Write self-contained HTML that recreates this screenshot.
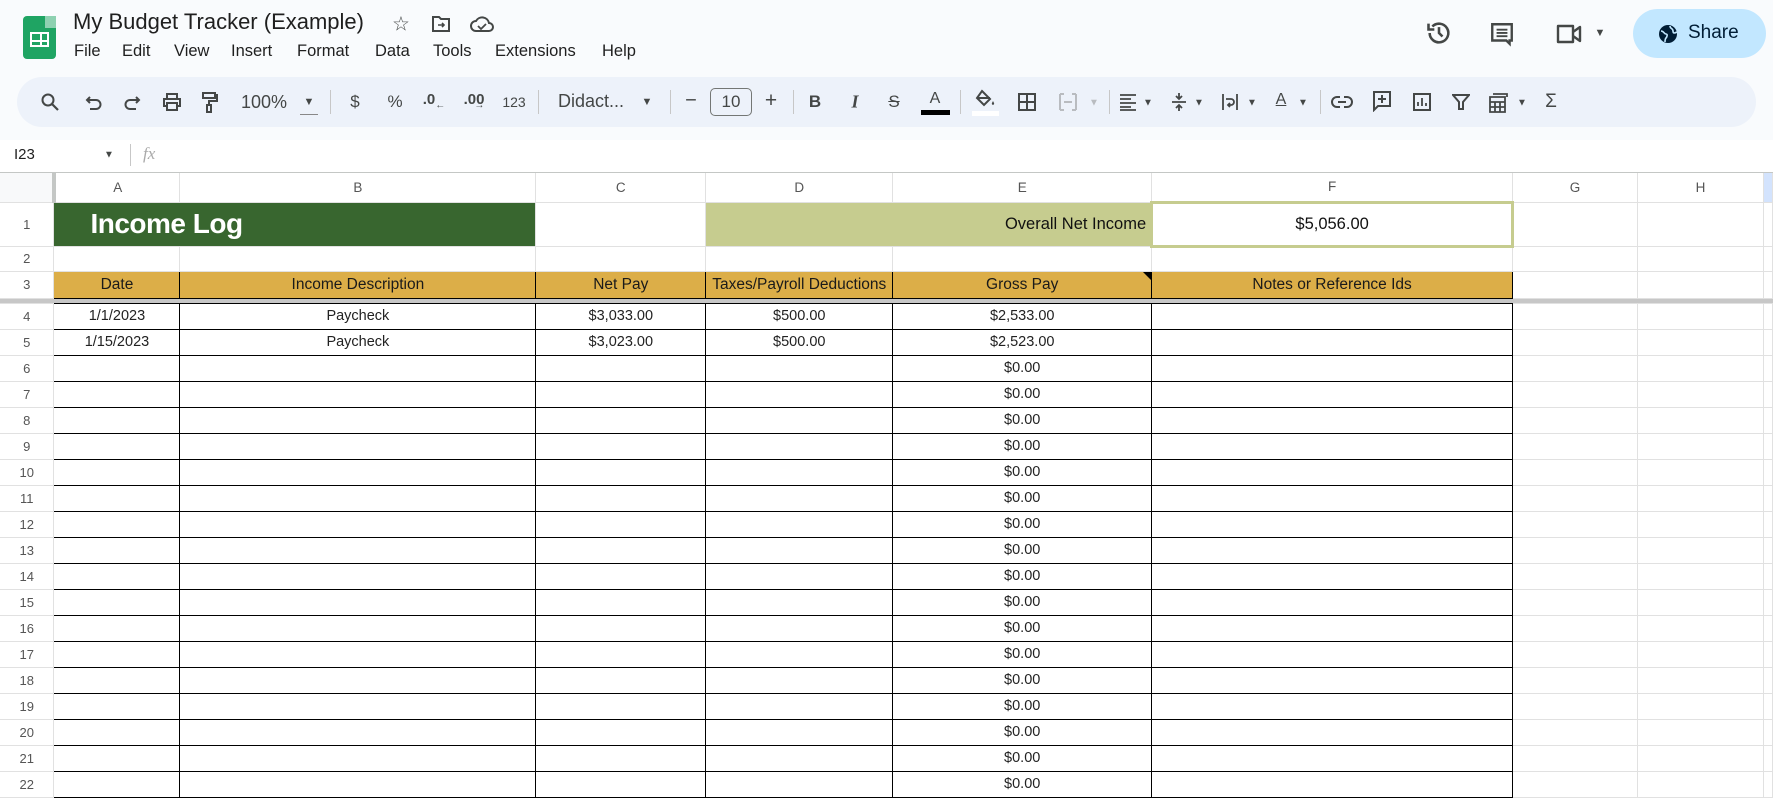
<!DOCTYPE html>
<html><head><meta charset="utf-8"><style>
*{box-sizing:border-box;margin:0;padding:0}
body{width:1773px;height:791px;overflow:hidden;background:#f9fbfd;font-family:"Liberation Sans",sans-serif;position:relative;color:#1f1f1f}
.a{position:absolute}
.ic{position:absolute;font-size:17px;color:#444746;transform:translate(-50%,-50%)}
svg.s{position:absolute;transform:translate(-50%,-50%)}
table{position:absolute;left:0;top:173px;border-collapse:collapse;table-layout:fixed;background:#fff}
td{border:1px solid #e1e1e1;padding:0;text-align:center;font-size:14.5px;color:#222;overflow:hidden;white-space:nowrap}
td:first-child{border-left:none}
tr:first-child td{border-top:none}
td.rh{color:#555;font-size:13px;background:#fff}
tr.ch td{color:#555;font-size:13.5px}
tr.d td.b{border:1px solid #000}
tr.h td.b{font-size:15.5px;color:#1a1a1a}
</style></head><body>
<div class="a" style="left:23px;top:16px;width:33px;height:43px;background:#1fa463;border-radius:4px;clip-path:polygon(0 0,68% 0,100% 28%,100% 100%,0 100%)"></div>
<div class="a" style="left:45px;top:16px;width:11px;height:12px;background:#8ed1b1"></div>
<div class="a" style="left:30px;top:32px;width:19px;height:15px;border:2px solid #fff;background:linear-gradient(#fff,#fff) 7.5px 0/2px 100% no-repeat,linear-gradient(#fff,#fff) 0 5.5px/100% 2px no-repeat"></div>
<div class="a" style="left:73px;top:9px;font-size:22px;color:#1f1f1f">My Budget Tracker (Example)</div>
<div class="ic" style="left:401px;top:24px;font-size:20px">☆</div>
<svg class="s" style="left:441px;top:24px" width="20" height="18" viewBox="0 0 20 18"><path d="M2 2h6l2 2h8v12H2z" fill="none" stroke="#444746" stroke-width="2"/><path d="M7 10h6M11 8l2 2-2 2" fill="none" stroke="#444746" stroke-width="1.6"/></svg>
<svg class="s" style="left:482px;top:24px" width="24" height="18" viewBox="0 0 24 18"><path d="M6 16a5 5 0 0 1 0-10 7 7 0 0 1 13 2 4 4 0 0 1 0 8z" fill="none" stroke="#444746" stroke-width="2"/><path d="M8 11l3 3 5-5" fill="none" stroke="#444746" stroke-width="1.8"/></svg>
<div class="a" style="left:74px;top:42px;font-size:16.5px">
<span style="position:absolute;left:0">File</span><span style="position:absolute;left:48px">Edit</span><span style="position:absolute;left:100px">View</span><span style="position:absolute;left:157px">Insert</span><span style="position:absolute;left:223px">Format</span><span style="position:absolute;left:301px">Data</span><span style="position:absolute;left:359px">Tools</span><span style="position:absolute;left:421px">Extensions</span><span style="position:absolute;left:528px">Help</span></div>
<svg class="s" style="left:1439px;top:33px" width="28" height="28" viewBox="0 0 24 24"><path d="M4 12a8 8 0 1 0 2.3-5.6M3 4v5h5" fill="none" stroke="#444746" stroke-width="2.2"/><path d="M12 7v5l3 3" fill="none" stroke="#444746" stroke-width="2.2"/></svg>
<svg class="s" style="left:1502px;top:34px" width="26" height="26" viewBox="0 0 24 24"><path d="M3 3h18v15h-2v3l-3-3H3z" fill="none" stroke="#444746" stroke-width="2.2"/><path d="M7 8h10M7 11h10M7 14h10" stroke="#444746" stroke-width="1.8"/></svg>
<svg class="s" style="left:1570px;top:34px" width="30" height="24" viewBox="0 0 30 24"><path d="M3 4h15v16H3zM18 10l7-5v14l-7-5" fill="none" stroke="#444746" stroke-width="2.4" stroke-linejoin="round"/></svg>
<div class="ic" style="left:1600px;top:33px;font-size:11px">▼</div>
<div class="a" style="left:1633px;top:9px;width:133px;height:49px;border-radius:25px;background:#c2e7ff"></div>
<svg class="s" style="left:1668px;top:34px" width="20" height="20" viewBox="0 0 20 20"><circle cx="10" cy="10" r="9" fill="#001d35"/><path d="M3 7c3 0 3 3 5 3s1 3 0 4-1 3-1 4M12 2c0 3 3 2 3 5s2 2 4 1" stroke="#c2e7ff" stroke-width="1.6" fill="none"/></svg>
<div class="a" style="left:1688px;top:22px;font-size:19px;color:#001d35">Share</div>
<div class="a" style="left:17px;top:77px;width:1739px;height:50px;border-radius:25px;background:#edf2fa"></div>
<svg class="s" style="left:50px;top:102px" width="20" height="20" viewBox="0 0 20 20"><circle cx="8" cy="8" r="5.5" fill="none" stroke="#444746" stroke-width="2"/><path d="M12 12l6 6" stroke="#444746" stroke-width="2.2"/></svg>
<svg class="s" style="left:94px;top:103px" width="18" height="18" viewBox="0 0 18 18"><path d="M5 3L2 6l3 3M2 6h9a4.5 4.5 0 0 1 0 9H5" fill="none" stroke="#444746" stroke-width="2"/></svg>
<svg class="s" style="left:132px;top:103px" width="18" height="18" viewBox="0 0 18 18"><path d="M13 3l3 3-3 3M16 6H7a4.5 4.5 0 0 0 0 9h6" fill="none" stroke="#444746" stroke-width="2"/></svg>
<svg class="s" style="left:172px;top:102px" width="20" height="20" viewBox="0 0 20 20"><path d="M5 7V2h10v5M5 14H2V7h16v7h-3M5 11h10v7H5z" fill="none" stroke="#444746" stroke-width="2"/></svg>
<svg class="s" style="left:210px;top:102px" width="18" height="22" viewBox="0 0 18 22"><path d="M2 2h12v5H2zM14 4h2v6H8v4M6 14h4v7H6z" fill="none" stroke="#444746" stroke-width="2"/></svg>
<div class="a" style="left:241px;top:92px;font-size:18px;color:#444746">100%</div>
<div class="ic" style="left:309px;top:102px;font-size:11px">▼</div>
<div class="a" style="left:300px;top:114px;width:18px;height:1px;background:#888"></div>
<div class="a" style="left:330px;top:90px;width:1px;height:24px;background:#c7c7c7"></div>
<div class="ic" style="left:355px;top:102px;font-size:17px">$</div>
<div class="ic" style="left:395px;top:102px;font-size:17px">%</div>
<div class="ic" style="left:434px;top:101px;font-size:15px;font-weight:bold">.0<sub style="font-size:10px">←</sub></div>
<div class="ic" style="left:474px;top:101px;font-size:15px;font-weight:bold">.00<sub style="font-size:10px;margin-left:-10px">→</sub></div>
<div class="ic" style="left:514px;top:102px;font-size:14px">123</div>
<div class="a" style="left:538px;top:90px;width:1px;height:24px;background:#c7c7c7"></div>
<div class="a" style="left:558px;top:91px;font-size:18px;color:#444746">Didact...</div>
<div class="ic" style="left:647px;top:102px;font-size:11px">▼</div>
<div class="a" style="left:670px;top:90px;width:1px;height:24px;background:#c7c7c7"></div>
<div class="ic" style="left:691px;top:101px;font-size:20px">−</div>
<div class="a" style="left:710px;top:88px;width:42px;height:28px;border:1px solid #747775;border-radius:5px;font-size:17px;text-align:center;line-height:26px;color:#444746">10</div>
<div class="ic" style="left:771px;top:101px;font-size:21px">+</div>
<div class="a" style="left:793px;top:90px;width:1px;height:24px;background:#c7c7c7"></div>
<div class="ic" style="left:815px;top:102px;font-size:17px;font-weight:bold">B</div>
<div class="ic" style="left:855px;top:102px;font-size:18px;font-style:italic;font-family:'Liberation Serif',serif;font-weight:bold">I</div>
<div class="ic" style="left:894px;top:102px;font-size:17px;text-decoration:line-through">S</div>
<div class="ic" style="left:935px;top:99px;font-size:16px">A</div>
<div class="a" style="left:921px;top:110px;width:29px;height:5px;background:#000"></div>
<div class="a" style="left:960px;top:90px;width:1px;height:24px;background:#c7c7c7"></div>
<svg class="s" style="left:985px;top:99px" width="22" height="20" viewBox="0 0 22 20"><path d="M8 2l8 8-6 6-7-7z" fill="none" stroke="#444746" stroke-width="2"/><path d="M3 9h13" stroke="#444746" stroke-width="2"/><path d="M19 12c1 2 2 3 0 4-2-1-1-2 0-4z" fill="#444746"/></svg>
<div class="a" style="left:972px;top:111px;width:27px;height:5px;background:#fff"></div>
<svg class="s" style="left:1027px;top:102px" width="20" height="20" viewBox="0 0 20 20"><path d="M2 2h16v16H2zM10 2v16M2 10h16" fill="none" stroke="#444746" stroke-width="2"/></svg>
<svg class="s" style="left:1068px;top:102px" width="20" height="20" viewBox="0 0 20 20"><path d="M2 2h4M2 18h4M14 2h4M14 18h4M2 2v16M18 2v16M6 10h8" fill="none" stroke="#b9bcc0" stroke-width="2"/></svg>
<div class="ic" style="left:1094px;top:103px;font-size:10px;color:#b9bcc0">▼</div>
<div class="a" style="left:1109px;top:90px;width:1px;height:24px;background:#c7c7c7"></div>
<svg class="s" style="left:1128px;top:102px" width="18" height="18" viewBox="0 0 18 18"><path d="M1 2h16M1 6h11M1 10h16M1 14h11M1 17h16" stroke="#444746" stroke-width="1.8"/></svg>
<div class="ic" style="left:1148px;top:103px;font-size:10px">▼</div>
<svg class="s" style="left:1179px;top:102px" width="16" height="20" viewBox="0 0 16 20"><path d="M1 10h14M8 1v6M5 4l3 3 3-3M8 19v-6M5 16l3-3 3 3" fill="none" stroke="#444746" stroke-width="1.8"/></svg>
<div class="ic" style="left:1199px;top:103px;font-size:10px">▼</div>
<svg class="s" style="left:1230px;top:102px" width="18" height="18" viewBox="0 0 18 18"><path d="M2 1v16M16 1v16M5 6h5a3 3 0 0 1 0 6H7M9 10l-2 2 2 2" fill="none" stroke="#444746" stroke-width="1.8"/></svg>
<div class="ic" style="left:1252px;top:103px;font-size:10px">▼</div>
<div class="ic" style="left:1281px;top:100px;font-size:16px;text-decoration:underline">A</div>
<div class="ic" style="left:1303px;top:103px;font-size:10px">▼</div>
<div class="a" style="left:1320px;top:90px;width:1px;height:24px;background:#c7c7c7"></div>
<svg class="s" style="left:1342px;top:102px" width="22" height="14" viewBox="0 0 22 14"><path d="M9 2H6a5 5 0 0 0 0 10h3M13 2h3a5 5 0 0 1 0 10h-3M7 7h8" fill="none" stroke="#444746" stroke-width="2"/></svg>
<svg class="s" style="left:1382px;top:101px" width="20" height="22" viewBox="0 0 20 22"><path d="M2 2h16v14H6l-4 4z" fill="none" stroke="#444746" stroke-width="2"/><path d="M10 5v8M6 9h8" stroke="#444746" stroke-width="2"/></svg>
<svg class="s" style="left:1422px;top:102px" width="18" height="18" viewBox="0 0 18 18"><path d="M1 1h16v16H1z" fill="none" stroke="#444746" stroke-width="2"/><path d="M5 13V9M9 13V5M13 13v-3" stroke="#444746" stroke-width="1.8"/></svg>
<svg class="s" style="left:1461px;top:102px" width="18" height="18" viewBox="0 0 18 18"><path d="M1 2h16l-6 7v7H7V9z" fill="none" stroke="#444746" stroke-width="2"/></svg>
<svg class="s" style="left:1499px;top:103px" width="20" height="20" viewBox="0 0 20 20"><path d="M4 1h14v3M1 4h15v15H1zM1 9h15M6 9v10M11 9v10M1 14h15" fill="none" stroke="#444746" stroke-width="1.8"/></svg>
<div class="ic" style="left:1522px;top:103px;font-size:10px">▼</div>
<div class="ic" style="left:1551px;top:102px;font-size:19px">Σ</div>
<div class="a" style="left:0;top:140px;width:1773px;height:33px;background:#fff"></div>
<div class="a" style="left:14px;top:146px;font-size:15px;color:#1f1f1f">I23</div>
<div class="ic" style="left:109px;top:155px;font-size:10px">▼</div>
<div class="a" style="left:130px;top:144px;width:1px;height:22px;background:#c7c7c7"></div>
<div class="a" style="left:143px;top:144px;font-size:17px;font-style:italic;color:#aaa;font-family:'Liberation Serif',serif">fx</div>
<div class="a" style="left:0;top:172px;width:1773px;height:1px;background:#c4c7c5"></div>
<table>
<colgroup><col style="width:54px"><col style="width:126px"><col style="width:356px"><col style="width:170px"><col style="width:187px"><col style="width:259px"><col style="width:361px"><col style="width:125px"><col style="width:126px"><col style="width:9px"></colgroup>
<tr class="ch" style="height:29px"><td style="background:#f8f9fa;border-right:4px solid #c4c7c5"></td><td>A</td><td>B</td><td>C</td><td>D</td><td>E</td><td>F</td><td>G</td><td>H</td><td style="background:#d3e3fd"></td></tr>
<tr style="height:44px"><td class="rh">1</td><td colspan="2" style="background:#38662f;color:#fff;font-size:28px;text-align:left;padding-left:36px;font-weight:bold;letter-spacing:-0.5px">Income Log</td><td></td><td colspan="2" style="background:#c6cc8f;text-align:right;padding-right:4px;font-size:16.5px;color:#111">Overall Net Income</td><td style="border:3px solid #c6cc8f;font-size:16.5px;color:#111">$5,056.00</td><td></td><td></td><td></td></tr>
<tr style="height:25px"><td class="rh">2</td><td></td><td></td><td></td><td></td><td></td><td></td><td></td><td></td><td></td></tr>
<tr class="d h" style="height:27px"><td class="rh">3</td><td class="b" style="background:#dcae48">Date</td><td class="b" style="background:#dcae48">Income Description</td><td class="b" style="background:#dcae48">Net Pay</td><td class="b" style="background:#dcae48">Taxes/Payroll Deductions</td><td class="b" style="background:#dcae48;position:relative">Gross Pay<span style="position:absolute;right:0;top:0;width:0;height:0;border-top:8px solid #000;border-left:8px solid transparent"></span></td><td class="b" style="background:#dcae48">Notes or Reference Ids</td><td></td><td></td><td></td></tr>
<tr style="height:5px"><td colspan="10" style="background:#c7c7c7;border:none"></td></tr>
<tr class="d" style="height:26px"><td class="rh">4</td><td class="b">1/1/2023</td><td class="b">Paycheck</td><td class="b">$3,033.00</td><td class="b">$500.00</td><td class="b">$2,533.00</td><td class="b"></td><td></td><td></td><td></td></tr>
<tr class="d" style="height:26px"><td class="rh">5</td><td class="b">1/15/2023</td><td class="b">Paycheck</td><td class="b">$3,023.00</td><td class="b">$500.00</td><td class="b">$2,523.00</td><td class="b"></td><td></td><td></td><td></td></tr>
<tr class="d" style="height:26px"><td class="rh">6</td><td class="b"></td><td class="b"></td><td class="b"></td><td class="b"></td><td class="b">$0.00</td><td class="b"></td><td></td><td></td><td></td></tr>
<tr class="d" style="height:26px"><td class="rh">7</td><td class="b"></td><td class="b"></td><td class="b"></td><td class="b"></td><td class="b">$0.00</td><td class="b"></td><td></td><td></td><td></td></tr>
<tr class="d" style="height:26px"><td class="rh">8</td><td class="b"></td><td class="b"></td><td class="b"></td><td class="b"></td><td class="b">$0.00</td><td class="b"></td><td></td><td></td><td></td></tr>
<tr class="d" style="height:26px"><td class="rh">9</td><td class="b"></td><td class="b"></td><td class="b"></td><td class="b"></td><td class="b">$0.00</td><td class="b"></td><td></td><td></td><td></td></tr>
<tr class="d" style="height:26px"><td class="rh">10</td><td class="b"></td><td class="b"></td><td class="b"></td><td class="b"></td><td class="b">$0.00</td><td class="b"></td><td></td><td></td><td></td></tr>
<tr class="d" style="height:26px"><td class="rh">11</td><td class="b"></td><td class="b"></td><td class="b"></td><td class="b"></td><td class="b">$0.00</td><td class="b"></td><td></td><td></td><td></td></tr>
<tr class="d" style="height:26px"><td class="rh">12</td><td class="b"></td><td class="b"></td><td class="b"></td><td class="b"></td><td class="b">$0.00</td><td class="b"></td><td></td><td></td><td></td></tr>
<tr class="d" style="height:26px"><td class="rh">13</td><td class="b"></td><td class="b"></td><td class="b"></td><td class="b"></td><td class="b">$0.00</td><td class="b"></td><td></td><td></td><td></td></tr>
<tr class="d" style="height:26px"><td class="rh">14</td><td class="b"></td><td class="b"></td><td class="b"></td><td class="b"></td><td class="b">$0.00</td><td class="b"></td><td></td><td></td><td></td></tr>
<tr class="d" style="height:26px"><td class="rh">15</td><td class="b"></td><td class="b"></td><td class="b"></td><td class="b"></td><td class="b">$0.00</td><td class="b"></td><td></td><td></td><td></td></tr>
<tr class="d" style="height:26px"><td class="rh">16</td><td class="b"></td><td class="b"></td><td class="b"></td><td class="b"></td><td class="b">$0.00</td><td class="b"></td><td></td><td></td><td></td></tr>
<tr class="d" style="height:26px"><td class="rh">17</td><td class="b"></td><td class="b"></td><td class="b"></td><td class="b"></td><td class="b">$0.00</td><td class="b"></td><td></td><td></td><td></td></tr>
<tr class="d" style="height:26px"><td class="rh">18</td><td class="b"></td><td class="b"></td><td class="b"></td><td class="b"></td><td class="b">$0.00</td><td class="b"></td><td></td><td></td><td></td></tr>
<tr class="d" style="height:26px"><td class="rh">19</td><td class="b"></td><td class="b"></td><td class="b"></td><td class="b"></td><td class="b">$0.00</td><td class="b"></td><td></td><td></td><td></td></tr>
<tr class="d" style="height:26px"><td class="rh">20</td><td class="b"></td><td class="b"></td><td class="b"></td><td class="b"></td><td class="b">$0.00</td><td class="b"></td><td></td><td></td><td></td></tr>
<tr class="d" style="height:26px"><td class="rh">21</td><td class="b"></td><td class="b"></td><td class="b"></td><td class="b"></td><td class="b">$0.00</td><td class="b"></td><td></td><td></td><td></td></tr>
<tr class="d" style="height:26px"><td class="rh">22</td><td class="b"></td><td class="b"></td><td class="b"></td><td class="b"></td><td class="b">$0.00</td><td class="b"></td><td></td><td></td><td></td></tr>
</table>
</body></html>
